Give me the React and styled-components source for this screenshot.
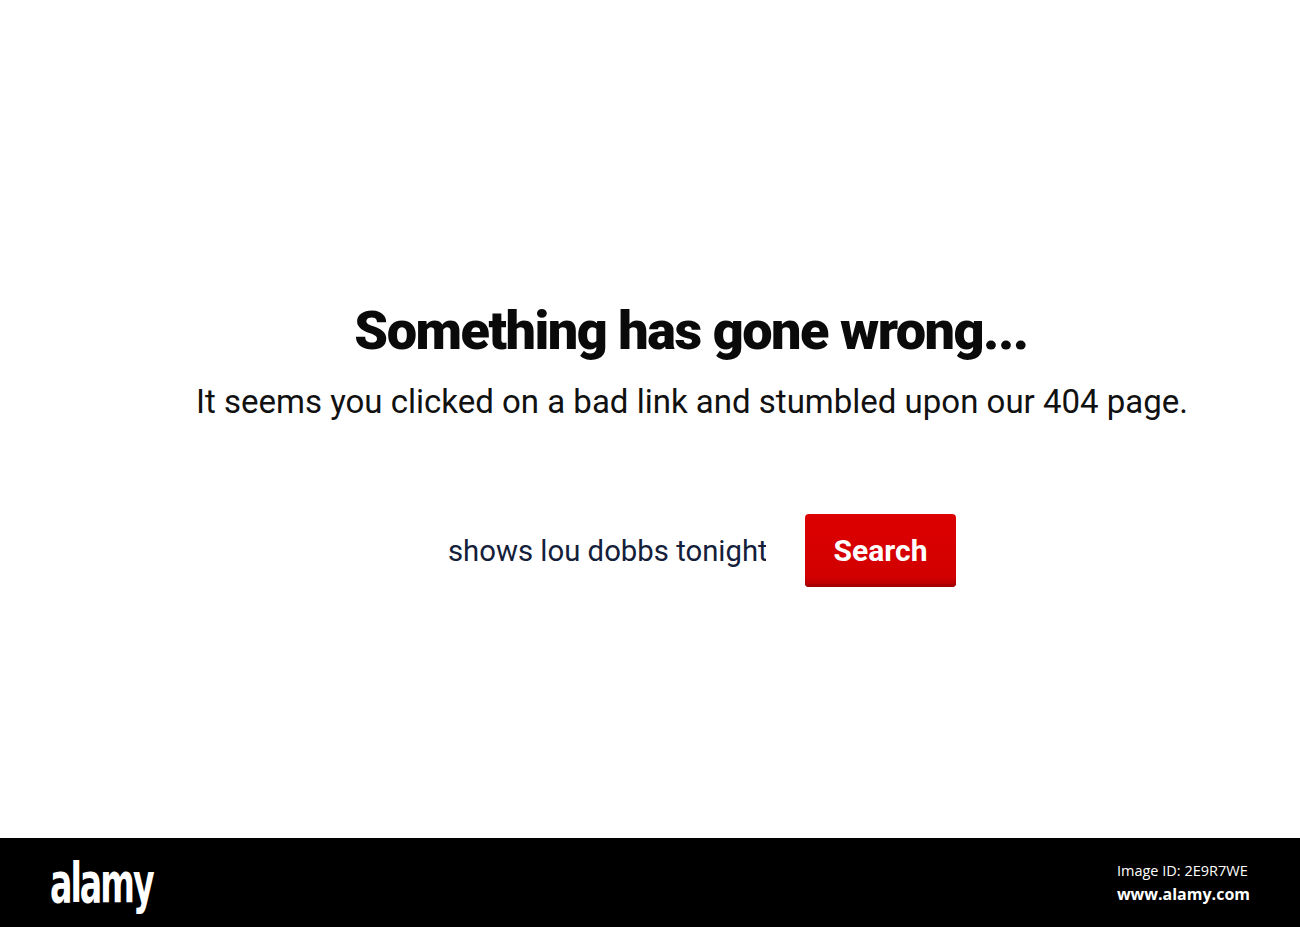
import React from "react";
import styled, { createGlobalStyle } from "styled-components";

const GlobalStyle = createGlobalStyle`
  html, body {
    margin: 0;
    padding: 0;
    background: #ffffff;
  }
  body {
    font-family: Roboto, "Liberation Sans", sans-serif;
  }
`;

const Page = styled.div`
  width: 1300px;
  height: 927px;
  display: flex;
  flex-direction: column;
  overflow: hidden;
`;

const Main = styled.main`
  height: 838px;
  display: flex;
  flex-direction: column;
  align-items: center;
  padding-top: 296px;
  padding-left: 82px;
  box-sizing: border-box;
`;

const Title = styled.h1`
  margin: 0;
  font-family: Roboto, sans-serif;
  font-weight: 900;
  font-size: 54px;
  line-height: 70px;
  letter-spacing: -1.5px;
  color: #0a0a0a;
`;

const Lead = styled.p`
  margin: 14px 0 0 2px;
  font-family: Roboto, sans-serif;
  font-size: 33px;
  line-height: 44px;
  color: #111111;
`;

const SearchRow = styled.form`
  margin-top: 90px;
  margin-left: 22px;
  display: flex;
  align-items: center;
  gap: 39px;
`;

const SearchInput = styled.input`
  border: none;
  outline: none;
  background: transparent;
  width: 318px;
  padding: 0;
  font-family: Roboto, sans-serif;
  font-size: 29.3px;
  color: #14203a;
`;

const SearchButton = styled.button`
  width: 151px;
  height: 73px;
  border: none;
  border-radius: 4px;
  background: linear-gradient(#dc0000, #d20000 85%, #b40000);
  box-shadow: inset 0 -3px 0 #a80000;
  color: #ffffff;
  font-family: Roboto, sans-serif;
  font-weight: 700;
  font-size: 30px;
  cursor: pointer;
`;

const Footer = styled.footer`
  height: 89px;
  background: #000000;
  display: flex;
  align-items: center;
  justify-content: space-between;
  padding: 0 50px;
  box-sizing: border-box;
`;

const Logo = styled.div`
  font-family: "DejaVu Sans Condensed", "DejaVu Sans", sans-serif;
  font-stretch: condensed;
  font-weight: 700;
  font-size: 56px;
  letter-spacing: -3px;
  color: #ffffff;
  transform: scaleX(0.66);
  transform-origin: left center;
`;

const Credit = styled.div`
  display: flex;
  flex-direction: column;
  align-items: flex-start;
  gap: 3px;
  font-family: "Open Sans", "DejaVu Sans", sans-serif;
  color: #ffffff;
`;

const CreditLine = styled.span`
  font-size: ${(p) => (p.$strong ? "16px" : "14.5px")};
  font-weight: ${(p) => (p.$strong ? 700 : 400)};
`;

export default function App() {
  return (
    <>
      <GlobalStyle />
      <Page>
        <Main>
          <Title>Something has gone wrong...</Title>
          <Lead>It seems you clicked on a bad link and stumbled upon our 404 page.</Lead>
          <SearchRow onSubmit={(e) => e.preventDefault()}>
            <SearchInput defaultValue="shows lou dobbs tonight" />
            <SearchButton type="submit">Search</SearchButton>
          </SearchRow>
        </Main>
        <Footer>
          <Logo>alamy</Logo>
          <Credit>
            <CreditLine>Image ID: 2E9R7WE</CreditLine>
            <CreditLine $strong>www.alamy.com</CreditLine>
          </Credit>
        </Footer>
      </Page>
    </>
  );
}
